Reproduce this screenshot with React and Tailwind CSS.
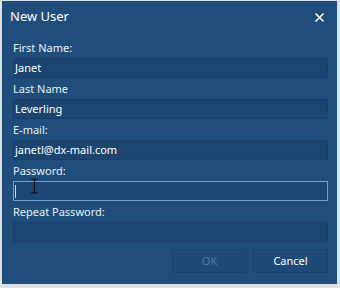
import React from "react";

const font = { fontFamily: '"Noto Sans", "Open Sans", sans-serif' };

function Field({ label, value, focused }) {
  return (
    <div className="flex flex-col">
      <div className="h-[16px] leading-[16px] text-[11px] text-[#e8eef5]">{label}</div>
      <div
        className={
          "relative mt-[2px] h-[20px] flex items-center px-[1px] text-[11px] text-white border " +
          (focused ? "bg-[#1d4875] border-[#6f9fd0]" : "bg-[#1c4670] border-[#1a406a]")
        }
      >
        {value}
        {focused && (
          <>
            <span className="w-px h-[13px] bg-[#c9d8e8]" />
            <svg className="absolute left-[16px] top-[-4px]" width="9" height="16" viewBox="0 0 9 16">
              <path d="M1 1h2.5l1 1 1-1H8M4.5 2v12M1 15h2.5l1-1 1 1H8" stroke="#111" strokeWidth="1.2" fill="none" />
            </svg>
          </>
        )}
      </div>
    </div>
  );
}

export default function App() {
  return (
    <div className="w-[340px] h-[288px] bg-[#dde2e8] pt-px pl-[2px] pr-[3px] pb-[4px]" style={font}>
      <div className="h-full flex flex-col bg-[#1f4e7c]">
        <div className="h-[32px] flex items-center justify-between pl-[8px] pr-[13px]">
          <span className="text-[13px] text-white">New User</span>
          <svg width="9" height="9" viewBox="0 0 9 9">
            <path d="M0.5 0.5l8 8M8.5 0.5l-8 8" stroke="#fff" strokeWidth="1.5" />
          </svg>
        </div>
        <div className="flex flex-col gap-[3px] pt-[7px] pl-[11px] pr-[9px]">
          <Field label="First Name:" value="Janet" />
          <Field label="Last Name" value="Leverling" />
          <Field label="E-mail:" value="janetl@dx-mail.com" />
          <Field label="Password:" value="" focused />
          <Field label="Repeat Password:" value="" />
        </div>
        <div className="flex justify-end gap-[6px] pt-[7px] pr-[9px]">
          <button className="w-[75px] h-[24px] bg-[#1d4a77] border border-[#1a4270] text-[11px] text-[#4f7aa5]">
            OK
          </button>
          <button className="w-[75px] h-[24px] bg-[#1d4a77] border border-[#1a4270] text-[11px] text-white">
            Cancel
          </button>
        </div>
      </div>
    </div>
  );
}
